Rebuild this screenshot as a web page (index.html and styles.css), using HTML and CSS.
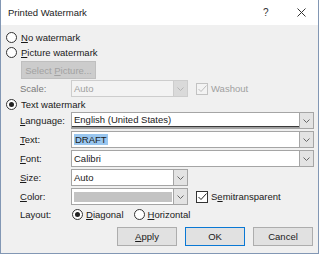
FILE: index.html
```html
<!DOCTYPE html>
<html lang="en">
<head>
    <meta charset="UTF-8">
    <meta name="viewport" content="width=device-width, initial-scale=1.0">
    <title>Printed Watermark</title>
    <link rel="stylesheet" href="styles.css">
</head>
<body>
    <div class="window">
        <div class="titlebar">
            <span class="title">Printed Watermark</span>
            <span class="help">?</span>
            <span class="close">
                <svg width="9" height="9" viewBox="0 0 9 9"><path d="M0.5 0.5L8.5 8.5M8.5 0.5L0.5 8.5" stroke="#333" stroke-width="1" fill="none"/></svg>
            </span>
        </div>

        <div class="content">
            <div class="radio-row">
                <span class="radio"></span>
                <span><u>N</u>o watermark</span>
            </div>
            <div class="radio-row">
                <span class="radio"></span>
                <span><u>P</u>icture watermark</span>
            </div>
            <div class="picture-row">
                <span class="btn btn-disabled"><span>Select <u>P</u>icture...</span></span>
            </div>
            <div class="field first">
                <span class="label muted">Scale:</span>
                <div class="combo short combo-disabled">
                    <span class="value">Auto</span>
                    <span class="arrow">
                        <svg width="7" height="4" viewBox="0 0 7 4"><path d="M0.5 0.5L3.5 3.5L6.5 0.5" stroke="#b5b5b5" fill="none"/></svg>
                    </span>
                </div>
                <span class="check check-disabled">
                    <svg width="9" height="8" viewBox="0 0 9 8"><path d="M0.5 4L3 6.5L8.5 0.5" stroke="#bdbdbd" fill="none"/></svg>
                </span>
                <span class="disabled-text">Washout</span>
            </div>

            <div class="radio-row text-radio">
                <span class="radio checked"></span>
                <span>Text watermark</span>
            </div>
            <div class="field tight">
                <span class="label"><u>L</u>anguage:</span>
                <div class="combo long">
                    <span class="value underline">English (United States)</span>
                    <span class="arrow">
                        <svg width="7" height="4" viewBox="0 0 7 4"><path d="M0.5 0.5L3.5 3.5L6.5 0.5" stroke="#666" fill="none"/></svg>
                    </span>
                </div>
            </div>
            <div class="field">
                <span class="label"><u>T</u>ext:</span>
                <div class="combo long">
                    <span class="value"><span class="selected">DRAFT</span></span>
                    <span class="arrow">
                        <svg width="7" height="4" viewBox="0 0 7 4"><path d="M0.5 0.5L3.5 3.5L6.5 0.5" stroke="#666" fill="none"/></svg>
                    </span>
                </div>
            </div>
            <div class="field">
                <span class="label"><u>F</u>ont:</span>
                <div class="combo long">
                    <span class="value">Calibri</span>
                    <span class="arrow">
                        <svg width="7" height="4" viewBox="0 0 7 4"><path d="M0.5 0.5L3.5 3.5L6.5 0.5" stroke="#666" fill="none"/></svg>
                    </span>
                </div>
            </div>
            <div class="field">
                <span class="label"><u>S</u>ize:</span>
                <div class="combo short">
                    <span class="value">Auto</span>
                    <span class="arrow">
                        <svg width="7" height="4" viewBox="0 0 7 4"><path d="M0.5 0.5L3.5 3.5L6.5 0.5" stroke="#666" fill="none"/></svg>
                    </span>
                </div>
            </div>
            <div class="field">
                <span class="label"><u>C</u>olor:</span>
                <div class="combo short">
                    <span class="value"><span class="swatch"></span></span>
                    <span class="arrow">
                        <svg width="7" height="4" viewBox="0 0 7 4"><path d="M0.5 0.5L3.5 3.5L6.5 0.5" stroke="#666" fill="none"/></svg>
                    </span>
                </div>
                <span class="check">
                    <svg width="9" height="8" viewBox="0 0 9 8"><path d="M0.5 4L3 6.5L8.5 0.5" stroke="#222" fill="none"/></svg>
                </span>
                <span>S<u>e</u>mitransparent</span>
            </div>
            <div class="field layout-row">
                <span class="label">Layout:</span>
                <span class="radio checked"></span>
                <span class="option"><u>D</u>iagonal</span>
                <span class="radio"></span>
                <span class="option"><u>H</u>orizontal</span>
            </div>

            <div class="buttons">
                <span class="btn"><span><u>A</u>pply</span></span>
                <span class="btn btn-default">OK</span>
                <span class="btn">Cancel</span>
            </div>
        </div>
    </div>
</body>
</html>
```

FILE: styles.css
```css
body {
    margin: 0;
    background: #fff;
    font-family: "Liberation Sans", Arial, sans-serif;
    font-size: 9.5px;
    color: #1a1a1a;
}
u {
    text-decoration: underline;
    text-underline-offset: 1px;
}
.window {
    width: 319px;
    height: 254px;
    box-sizing: border-box;
    border-left: 1px solid #8297b4;
    border-right: 1px solid #8297b4;
    border-bottom: 1px solid #8297b4;
    display: flex;
    flex-direction: column;
}
.titlebar {
    height: 25px;
    background: #fff;
    display: flex;
    align-items: center;
    padding-left: 7px;
    flex-shrink: 0;
}
.title {
    flex: 1;
    font-size: 9.5px;
    color: #222;
}
.help {
    width: 10px;
    margin-right: 24px;
    font-size: 10px;
    color: #333;
}
.close {
    width: 9px;
    height: 9px;
    margin-right: 12px;
    display: flex;
}
.content {
    flex: 1;
    background: #f0f0f0;
    padding: 5px 4px 0 5px;
}
.radio-row {
    height: 15px;
    display: flex;
    align-items: center;
}
.radio {
    width: 9px;
    height: 9px;
    border: 1px solid #333;
    border-radius: 50%;
    background: #fff;
    margin-right: 4px;
    position: relative;
    flex-shrink: 0;
}
.radio.checked::after {
    content: "";
    position: absolute;
    left: 2px;
    top: 2px;
    width: 5px;
    height: 5px;
    border-radius: 50%;
    background: #222;
}
.picture-row {
    margin-top: 1px;
    padding-left: 15px;
    display: flex;
}
.btn {
    height: 19px;
    box-sizing: border-box;
    border: 1px solid #adadad;
    background: #e1e1e1;
    display: flex;
    align-items: center;
    justify-content: center;
    color: #1a1a1a;
}
.btn-disabled {
    width: 75px;
    height: 18px;
    background: #cccccc;
    border-color: #bfbfbf;
    color: #a2a2a2;
}
.field {
    height: 17px;
    margin-top: 2px;
    display: flex;
    align-items: center;
    padding-left: 14px;
}
.field.first {
    margin-top: 1px;
}
.field.tight {
    margin-top: 0;
}
.label {
    width: 51px;
    flex-shrink: 0;
}
.muted {
    color: #7a7a7a;
}
.disabled-text {
    color: #a0a0a0;
}
.combo {
    height: 17px;
    box-sizing: border-box;
    border: 1px solid #a5a5a5;
    background: #fff;
    display: flex;
}
.combo.long {
    width: 243px;
}
.combo.short {
    width: 117px;
}
.combo-disabled {
    border-color: #cdcdcd;
    background: #f3f3f3;
    color: #a0a0a0;
}
.value {
    flex: 1;
    display: flex;
    align-items: center;
    padding-left: 2px;
}
.value.underline {
    margin-bottom: 1px;
    border-bottom: 1px solid #3a3a3a;
    box-shadow: 0 1px 0 #a0a0a0;
}
.selected {
    background: #99c6ef;
    padding: 0 1px;
    line-height: 11px;
}
.swatch {
    width: 98px;
    height: 10px;
    background: #c3c3c3;
}
.arrow {
    width: 13px;
    border-left: 1px solid #a5a5a5;
    background: #e3e3e3;
    display: flex;
    align-items: center;
    justify-content: center;
}
.combo-disabled .arrow {
    border-left-color: #cdcdcd;
    background: #dadada;
}
.check {
    width: 12px;
    height: 12px;
    box-sizing: border-box;
    border: 1px solid #333;
    background: #fff;
    margin-left: 8px;
    margin-right: 3px;
    display: flex;
    align-items: center;
    justify-content: center;
}
.check-disabled {
    border-color: #c2c2c2;
    background: #f3f3f3;
}
.layout-row {
    height: 16px;
    margin-top: 1px;
}
.layout-row .radio {
    margin-left: 1px;
    margin-right: 3px;
}
.option {
    margin-right: 9px;
}
.buttons {
    margin-top: 5px;
    display: flex;
    justify-content: flex-end;
    gap: 8px;
    padding-right: 1px;
}
.buttons .btn {
    width: 60px;
}
.btn-default {
    border-color: #0a78d4;
}
```
